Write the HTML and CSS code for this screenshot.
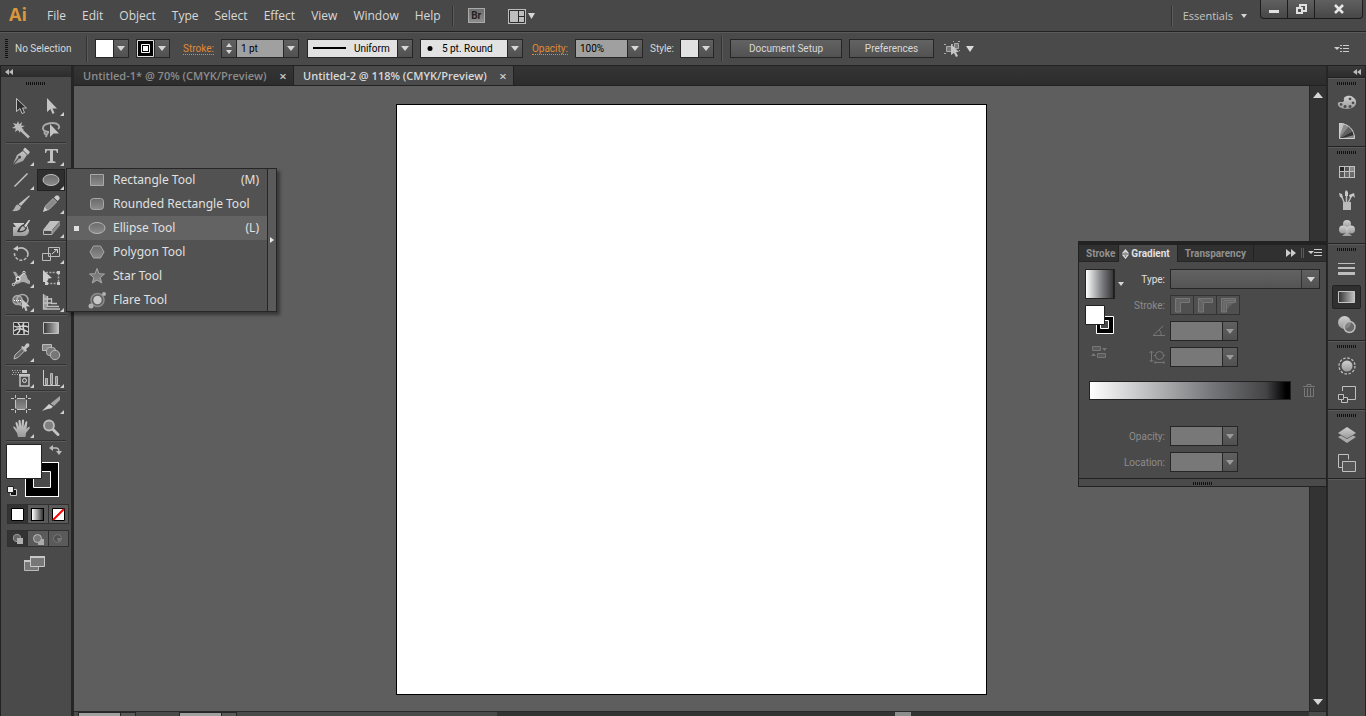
FILE: index.html
```html
<!DOCTYPE html>
<html lang="en">
<head>
  <meta charset="UTF-8" />
  <title>Untitled-2 @ 118% (CMYK/Preview)</title>
  <meta name="viewport" content="width=device-width, initial-scale=1.0"/>
  <link rel="stylesheet" href="styles.css">
</head>
<body>

<!-- shared gradients for the icons -->
<svg class="defs" width="0" height="0" aria-hidden="true">
  <defs>
    <linearGradient id="shape" x1="0" y1="0" x2="0" y2="1"><stop offset="0" stop-color="#6a6a6a"/><stop offset="1" stop-color="#8c8c8c"/></linearGradient>
    <linearGradient id="metal" x1="0" y1="0" x2="0" y2="1"><stop offset="0" stop-color="#d0d0d0"/><stop offset="1" stop-color="#9a9a9a"/></linearGradient>
    <linearGradient id="fade" x1="0" y1="0" x2="1" y2="0"><stop offset="0" stop-color="#333"/><stop offset="1" stop-color="#c4c4c4"/></linearGradient>
  </defs>
</svg>

<div class="app">

  <header class="menubar">
    <div class="logo">Ai</div>
    <nav class="menus">
      <button>File</button>
      <button>Edit</button>
      <button>Object</button>
      <button>Type</button>
      <button>Select</button>
      <button>Effect</button>
      <button>View</button>
      <button>Window</button>
      <button>Help</button>
    </nav>
    <span class="divider"></span>
    <button class="bridge">Br</button>
    <button class="arrange" aria-label="Arrange documents">
      <svg width="28" height="16" viewBox="0 0 28 16"><path fill="#bdbdbd" d="M0 1h18v15H0z"/><path fill="none" stroke="#2b2b2b" stroke-width="1" d="M1.500 2.500h15v12h-15zM10.500 2.500v12M10.500 8.500h6"/><path fill="#d6d6d6" d="M20 5h7l-3.500 6z"/></svg>
    </button>
    <span class="divider push"></span>
    <button class="workspace-name">Essentials <span class="tri small"></span></button>
    <div class="window-buttons">
      <button aria-label="Minimize"><svg width="12" height="12" viewBox="0 0 12 12"><path fill="#e0e0e0" d="M1 7h10v3H1z"/></svg></button>
      <button aria-label="Restore"><svg width="13" height="12" viewBox="0 0 13 12"><path fill="none" stroke="#e0e0e0" stroke-width="2" d="M2 5h5v5H2zM5 4V2h6v6H8"/></svg></button>
      <button class="close" aria-label="Close"><svg width="12" height="12" viewBox="0 0 12 12"><path fill="none" stroke="#e6e6e6" stroke-width="2.500" d="M2 2l8 8M10 2l-8 8"/></svg></button>
    </div>
  </header>

  <section class="controlbar">
    <span class="vgrip"></span>
    <span class="selection">No Selection</span>
    <span class="divider tall"></span>
    <div class="combo"><span class="chip white"></span><button aria-label="Fill"><span class="tri"></span></button></div>
    <div class="combo"><span class="chip stroke-chip"><svg width="17" height="17" viewBox="0 0 17 17"><path fill="#000" stroke="#ddd" d="M.500.500h16v16H.500z"/><path fill="#000" stroke="#fff" d="M4.500 4.500h8v8h-8z"/><path fill="#fff" d="M6 6h5v5H6z"/></svg></span><button aria-label="Stroke color"><span class="tri"></span></button></div>
    <div class="field">
      <a href="#stroke" class="hot">Stroke:</a>
      <div class="combo">
        <button class="stepper" aria-label="Step stroke"><span class="tri up"></span><span class="tri"></span></button>
        <input class="weight" type="text" value="1 pt" aria-label="Stroke weight">
        <button aria-label="Stroke weight list"><span class="tri"></span></button>
      </div>
    </div>
    <div class="combo light profile">
      <svg width="38" height="17" viewBox="0 0 38 17"><path fill="#000" d="M5 7h33v2H5z"/></svg>
      <select aria-label="Width profile"><option>Uniform</option></select>
      <span class="cap"><span class="tri"></span></span>
    </div>
    <div class="combo light brush">
      <svg width="16" height="17" viewBox="0 0 16 17"><circle cx="9" cy="8.500" r="2.500"/></svg>
      <select aria-label="Brush"><option>5 pt. Round</option></select>
      <span class="cap"><span class="tri"></span></span>
    </div>
    <div class="field opacity">
      <a href="#opacity" class="hot">Opacity:</a>
      <div class="combo">
        <input class="percent" type="text" value="100%" aria-label="Opacity">
        <button aria-label="Opacity list"><span class="tri"></span></button>
      </div>
    </div>
    <div class="field style">
      <span class="label">Style:</span>
      <div class="combo"><span class="chip pale"></span><button aria-label="Graphic style"><span class="tri"></span></button></div>
    </div>
    <span class="divider tall"></span>
    <button class="push-btn setup">Document Setup</button>
    <button class="push-btn prefs">Preferences</button>
    <button class="similar" aria-label="Select similar objects">
      <svg width="30" height="16" viewBox="0 0 30 16"><path fill="#777" stroke="#aaa" d="M2.500 5.500h5v5h-5zM10.500 2.500h4v5h-4z"/><path stroke="#aaa" stroke-width="1" fill="none" d="M0 3.500h2M0 12.500h2M7 3.500h2M14 .500h2M9 .500h1M15 9.500h1"/><path fill="#c4c4c4" d="M7 3l8 8h-3l2 4-2 1-2-4-3 2z"/><path fill="#dadada" d="M22 5h8l-4 6z"/></svg>
    </button>
    <button class="bar-menu" aria-label="Panel menu">
      <svg width="16" height="10" viewBox="0 0 16 10"><path fill="#ccc" d="M0 3h6L3 6z"/><path stroke="#ccc" fill="none" d="M6 1.500h2M9 1.500h6M6 4.500h2M9 4.500h6M6 7.500h2M9 7.500h6"/></svg>
    </button>
  </section>

  <main class="workspace">

    <aside class="toolbar">
      <div class="collapse"><svg width="9" height="6" viewBox="0 0 9 6"><path fill="#bbb" d="M4 0v6L0 3zM8 0v6L4 3z"/></svg></div>
      <div class="grip"></div>

      <div class="tools">
        <button class="tool" aria-label="Selection"><svg viewBox="0 0 20 20"><path fill="#303030" stroke="#c0c0c0" d="M5.500 2.500v13l3.500-3 2 5 2.500-1-2-4.500h4z"/></svg></button>
        <button class="tool more" aria-label="Direct Selection"><svg viewBox="0 0 20 20"><path fill="#c4c4c4" d="M6 2v14l3.500-3 2 5 2-1-2-4.500H16z"/></svg></button>
        <button class="tool" aria-label="Magic Wand"><svg viewBox="0 0 20 20"><path fill="#bbb" d="M7 1l1.200 3.200L11 2l-.8 3.500L14 6l-3.500 1.500L13 10l-3.500-.5L9 13l-2-3-3 2 .8-3.500L1 8l3.200-2L2 3l3.800 1z"/><path stroke="#bbb" stroke-width="2.500" d="M9 9l9 8.500"/></svg></button>
        <button class="tool" aria-label="Lasso"><svg viewBox="0 0 20 20"><path fill="none" stroke="#aaa" stroke-width="1.800" d="M8 12C3 12 1.500 9.500 2 7.500 3 3 14 1.500 17.500 5c1.200 1.500.5 3-.5 4M5 11c-3 2-1 4 1 3s0-3-1-2M6 14l-1 3"/><path fill="#c4c4c4" d="M9 4v13l3.500-3.500H18z"/></svg></button>
      </div>
      <div class="tools">
        <button class="tool more" aria-label="Pen"><svg viewBox="0 0 20 20"><path fill="url(#metal)" d="M2 18l4-9 6-4 4 4-4 6-9 3.500 5-6a1.500 1.500 0 1 0-.8-.8zM12 4l2-2.500L19 6l-2 3z"/></svg></button>
        <button class="tool more" aria-label="Type"><svg viewBox="0 0 20 20"><path fill="#c0c0c0" d="M4 3h13v4h-1l-1-2.500h-3V15l2.500.8v1.200h-8v-1.200L9 15V4.500H6L5 7H4z"/></svg></button>
        <button class="tool more" aria-label="Line Segment"><svg viewBox="0 0 20 20"><path stroke="#c4c4c4" stroke-width="1.400" d="M3.500 16.500l13-13"/></svg></button>
        <div class="slot">
          <button class="tool more active" aria-label="Ellipse"><svg viewBox="0 0 20 20"><ellipse cx="10" cy="10" rx="8" ry="5.500" fill="url(#shape)" stroke="#bdbdbd"/></svg></button>
          <div class="flyout">
            <ul>
              <li><button><svg viewBox="0 0 18 18"><path fill="url(#shape)" stroke="#a8a8a8" d="M2.500 3.500h13v11h-13z"/></svg>Rectangle Tool<kbd>(M)</kbd></button></li>
              <li><button><svg viewBox="0 0 18 18"><rect x="2.500" y="3.500" width="13" height="11" rx="3" fill="url(#shape)" stroke="#a8a8a8"/></svg>Rounded Rectangle Tool</button></li>
              <li class="current"><button><svg viewBox="0 0 18 18"><ellipse cx="9" cy="9" rx="8" ry="5.500" fill="url(#shape)" stroke="#b4b4b4"/></svg>Ellipse Tool<kbd>(L)</kbd></button></li>
              <li><button><svg viewBox="0 0 18 18"><path fill="url(#shape)" stroke="#a8a8a8" d="M5.500 3h7L16 9l-3.500 6h-7L2 9z"/></svg>Polygon Tool</button></li>
              <li><button><svg viewBox="0 0 18 18"><path fill="url(#shape)" stroke="#a8a8a8" d="M9 1.500l2 5.300 5.500.2-4.300 3.500 1.500 5.500L9 13l-4.700 3 1.500-5.500L1.500 7l5.500-.2z"/></svg>Star Tool</button></li>
              <li><button><svg viewBox="0 0 18 18"><circle cx="9.500" cy="9" r="6.500" fill="#5e5e5e" stroke="#8c8c8c" stroke-width="1.500"/><circle cx="9.500" cy="9" r="4.200" fill="#c8c8c8"/><circle cx="3" cy="15" r="2.500" fill="#b0b0b0"/><circle cx="16" cy="3" r="2" fill="#b0b0b0"/></svg>Flare Tool</button></li>
            </ul>
            <button class="tearoff" aria-label="Tear off"><svg width="4" height="6" viewBox="0 0 4 6"><path fill="#e8e8e8" d="M0 0l4 3-4 3z"/></svg></button>
          </div>
        </div>
        <button class="tool" aria-label="Paintbrush"><svg viewBox="0 0 20 20"><path fill="#c0c0c0" d="M19 2L10 12 7.500 10 18 1.500z"/><path fill="#b0b0b0" d="M7 10.500l3 2.500c-1 4-5 4.500-9 4 3-1.500 2.500-6 6-6.500z"/></svg></button>
        <button class="tool more" aria-label="Pencil"><svg viewBox="0 0 20 20"><path fill="#8a8a8a" stroke="#aaa" d="M3 17l1.500-5L12 4.500 15.500 8 8 15.500z"/><path fill="#ccc" d="M13 3.500l2-2h2L18.500 3v2l-2 2zM2 18l1.500-5 3 3z"/></svg></button>
        <button class="tool" aria-label="Blob Brush"><svg viewBox="0 0 20 20"><path fill="url(#metal)" d="M2 5h11v3h4c0 2 0 3 1 4 0 4-2 6-6 6H2V9h3z"/><path fill="#3a3a3a" d="M13 6l3 4c-1 4-6 5-10 4 1-2 2-6 7-8z"/><path fill="#b4b4b4" d="M12 8l2.500 2c-1 3-4 3-6 3 1-2 1-4 3.500-5z"/><path fill="#d0d0d0" stroke="#3a3a3a" stroke-width=".8" d="M18 1l1.500 1.500L15 10l-2.500-2z"/></svg></button>
        <button class="tool more" aria-label="Eraser"><svg viewBox="0 0 20 20"><path fill="#c0c0c0" d="M9 3h10l-8 9H2z"/><path fill="#8d8d8d" d="M11 12.500l8-9v4l-7.500 9z"/><path fill="none" stroke="#b8b8b8" d="M2.500 12.500h8.500v4H2.500zM5 12l5-6"/></svg></button>
      </div>
      <div class="tools">
        <button class="tool more" aria-label="Rotate"><svg viewBox="0 0 20 20"><path fill="none" stroke="#bbb" stroke-width="1.600" d="M7 4.500c5-2 10 1.500 10 5.500"/><path fill="none" stroke="#bbb" stroke-width="1.600" stroke-dasharray="3 1.500" d="M17 10a6.500 6.500 0 1 1-13.500-1"/><path fill="#ccc" d="M2 5l5-3.500V7z"/></svg></button>
        <button class="tool more" aria-label="Scale"><svg viewBox="0 0 20 20"><path fill="none" stroke="#bbb" d="M7.500 3.500h11v9h-11zM1.500 9.500h8v7h-8z"/><path stroke="#d8d8d8" d="M11 10l5-4.500M13 5.500h3.500V9" fill="none"/></svg></button>
        <button class="tool more" aria-label="Width"><svg viewBox="0 0 20 20"><path fill="#a8a8a8" d="M2 4c3-1 4 1 5 4 3 0 3-3 6-3 4 1 2 6 6 8v3c-3 0-5-2-7-2-3 0-4 3-9 2 1-2 2-3 2-5S3 6 2 4z"/><path stroke="#ddd" fill="none" d="M2 17L13 5"/><circle cx="7" cy="11" r="2" fill="#4a4a4a" stroke="#fff"/><circle cx="2.500" cy="16.500" r="1.200" fill="#4a4a4a" stroke="#ddd"/><circle cx="13" cy="4.500" r="1.200" fill="#4a4a4a" stroke="#ddd"/></svg></button>
        <button class="tool" aria-label="Free Transform"><svg viewBox="0 0 20 20"><path fill="none" stroke="#aaa" stroke-width="1.500" stroke-dasharray="2 1.300" d="M5 4.500h12.500v11H5"/><path fill="#ccc" d="M16 3h3v3h-3zM16 14h3v3h-3zM4 14h3v3H4zM2 2l9 8-3.500.5L6 14 2 14z"/></svg></button>
        <button class="tool more" aria-label="Shape Builder"><svg viewBox="0 0 20 20"><circle cx="6.500" cy="8" r="4.500" fill="#777" stroke="#aaa" stroke-width="1.500"/><circle cx="11.500" cy="8" r="5.500" fill="none" stroke="#aaa" stroke-width="1.500"/><path stroke="#fff" stroke-dasharray="1 1" d="M3 8.500h9"/><path fill="#c8c8c8" d="M11 7l8 7.500h-4l1.500 4-2 .5-1.500-4-2 2z"/></svg></button>
        <button class="tool more" aria-label="Perspective Grid"><svg viewBox="0 0 20 20"><path fill="#999" d="M2 2l4 2v13H2z"/><path fill="none" stroke="#c0c0c0" stroke-width="1.300" d="M2.500 2v15H19M6.500 4v10.500H18M10.500 6v5.500H16M2 7h9M2 11h9"/></svg></button>
      </div>
      <div class="tools">
        <button class="tool" aria-label="Mesh"><svg viewBox="0 0 20 20"><path fill="#333" stroke="#c0c0c0" d="M2.500 4.500h15v12h-15z"/><path fill="none" stroke="#d0d0d0" stroke-width="1.500" d="M7 5c3 3 3 8-1 11M13 5c-3 3 1 6 0 11M3 8c4 3 8-2 14 1M3 13c5-4 8-2 14 1"/></svg></button>
        <button class="tool" aria-label="Gradient"><svg viewBox="0 0 20 20"><path fill="url(#fade)" stroke="#c0c0c0" d="M2.500 4.500h15v11h-15z"/></svg></button>
        <button class="tool more" aria-label="Eyedropper"><svg viewBox="0 0 20 20"><path fill="#666" stroke="#bbb" d="M3 17l1-4 7-6.500L13.500 9 7 15.500z"/><path fill="#c4c4c4" d="M10 5l1.500-1 1.500 1 2-3c2-2 4.500.5 3 2.500l-3 2.500 1 1.500-1.500 1.500z"/></svg></button>
        <button class="tool" aria-label="Blend"><svg viewBox="0 0 20 20"><path fill="#888" stroke="#bbb" d="M1.500 2.500h9v6h-9z"/><rect x="5.500" y="5.500" width="9" height="8" rx="3" fill="#777" stroke="#bbb"/><circle cx="14" cy="13" r="4.700" fill="#777" stroke="#bbb"/></svg></button>
      </div>
      <div class="tools">
        <button class="tool more" aria-label="Symbol Sprayer"><svg viewBox="0 0 20 20"><path fill="none" stroke="#bbb" stroke-dasharray="1 1.500" d="M1 2.500h9M2 4.500h8M1 6.500h8"/><path fill="#c8c8c8" d="M11 2h5v3h-5zM8 6h11v2H8z"/><path fill="#4a4a4a" stroke="#c0c0c0" stroke-width="1.500" d="M9 8h9v10H9z"/><circle cx="13.500" cy="12.500" r="2" fill="#555" stroke="#ddd"/></svg></button>
        <button class="tool more" aria-label="Column Graph"><svg viewBox="0 0 20 20"><path fill="none" stroke="#ccc" d="M2.500 2v15.500H19"/><path fill="#888" stroke="#bbb" d="M4.500 10.500h2v6h-2zM9.500 5.500h2v11h-2zM14.500 8.500h2v8h-2z"/></svg></button>
      </div>
      <div class="tools">
        <button class="tool" aria-label="Artboard"><svg viewBox="0 0 20 20"><path fill="url(#shape)" d="M4 5h12v10H4z"/><path fill="none" stroke="#c4c4c4" d="M4.500 1v3M4.500 16v3M15.500 1v3M15.500 16v3M0 4.500h3M0 15.500h3M17 4.500h3M17 15.500h3M4.500 6v8M15.500 6v8M6 4.500h8M6 15.500h8"/></svg></button>
        <button class="tool more" aria-label="Slice"><svg viewBox="0 0 20 20"><path fill="#a4a4a4" d="M19 2v4l-6 6-3.500-2.500z"/><path fill="#d0d0d0" d="M1 17l7-7 4 2.500-2 2c-3 0-5 1-9 2.500z"/></svg></button>
        <button class="tool more" aria-label="Hand"><svg viewBox="0 0 20 20"><path fill="url(#metal)" d="M2 9c1-1 2 0 4 2L4.500 5c0-1.500 1.500-1.500 2 0L8 9 7.500 3c0-1.500 2-1.500 2 0l.8 6L11 2.500c.2-1.500 2-1.200 2 .2l-.3 6.800L14.500 4c.6-1.200 2-.6 1.700.7L15.500 11l2-2c1.300-.6 1.500.6 1 1.400L15 15l-.5 4H7l-1-4z"/></svg></button>
        <button class="tool" aria-label="Zoom"><svg viewBox="0 0 20 20"><circle cx="8" cy="7.500" r="5" fill="#808080" stroke="#bdbdbd" stroke-width="1.800"/><path stroke="#c4c4c4" stroke-width="3" stroke-linecap="round" d="M12.500 12l4.500 4.500"/></svg></button>
      </div>

      <div class="colors">
        <svg width="62" height="58" viewBox="0 0 62 58" role="img" aria-label="Fill and stroke">
          <path fill="#fff" d="M19 19h34v35H19z"/><path fill="#000" d="M20 20h32v33H20z"/><path fill="#4a4a4a" stroke="#fff" d="M27.500 28.500h17v16h-17z"/>
          <path fill="#fff" stroke="#222" d="M.500 1.500h35v34H.500z"/>
          <path fill="none" stroke="#bbb" stroke-width="1.300" d="M46 5h4q3 0 3 4"/><path fill="#bbb" d="M43 5l4-3v6zM50 8h6l-3 4z"/>
          <path fill="#111" stroke="#ccc" d="M4.500 46.500h6v6h-6z"/><path fill="#eee" stroke="#222" d="M1.500 43.500h6v6h-6z"/>
        </svg>
      </div>
      <div class="modes paint">
        <button class="on" aria-label="Color"><svg width="13" height="13" viewBox="0 0 13 13"><path fill="#fff" stroke="#000" d="M.500.500h12v12H.500z"/></svg></button>
        <button aria-label="Gradient fill"><span class="mini-gradient"></span></button>
        <button aria-label="None"><svg width="13" height="13" viewBox="0 0 13 13"><path fill="#fff" stroke="#000" d="M.500.500h12v12H.500z"/><path stroke="#f00" stroke-width="2" d="M1 12L12 1"/></svg></button>
      </div>
      <div class="modes draw">
        <button class="on" aria-label="Draw Normal"><svg width="12" height="12" viewBox="0 0 12 12"><circle cx="5" cy="5" r="3.700" fill="#666" stroke="#999"/><path fill="#b0b0b0" d="M5 5h6v6H5z"/></svg></button>
        <button aria-label="Draw Behind"><svg width="12" height="12" viewBox="0 0 12 12"><path fill="#aaa" d="M6 6h6v6H6z"/><circle cx="5.500" cy="5.500" r="4" fill="#777" stroke="#bbb"/></svg></button>
        <button aria-label="Draw Inside" disabled><svg width="12" height="12" viewBox="0 0 12 12"><circle cx="5.500" cy="5.500" r="4" fill="#4f4f4f" stroke="#777"/><path fill="#777" d="M5 5h5v1L6 9z"/></svg></button>
      </div>
      <button class="screen-mode" aria-label="Screen mode"><svg width="22" height="17" viewBox="0 0 22 17"><path fill="#777" stroke="#bbb" d="M.500 5.500h14v10H.500z"/><path fill="#777" stroke="#c8c8c8" d="M6.500 1.500h14v10h-14z"/><path fill="#c8c8c8" d="M6 1h15v2H6zM0 5h6v2H0z"/></svg></button>
    </aside>

    <section class="document">
      <div class="tabs">
        <div class="tab"><span>Untitled-1* @ 70% (CMYK/Preview)</span><button aria-label="Close tab">×</button></div>
        <div class="tab selected"><span>Untitled-2 @ 118% (CMYK/Preview)</span><button aria-label="Close tab">×</button></div>
      </div>
      <div class="view">
        <div class="canvas"><div class="artboard"></div></div>
        <div class="vscroll"><span class="tri up big"></span><span class="tri big"></span></div>
      </div>
      <div class="statusbar">
        <span class="status-box"></span><span class="status-cap"></span>
        <span class="status-box second"></span><span class="status-cap"></span>
        <span class="status-fill"></span>
        <span class="hscroll"><span class="thumb"></span></span>
        <span class="corner"></span>
      </div>
    </section>

    <aside class="dock">
      <div class="collapse right"><svg width="9" height="6" viewBox="0 0 9 6"><path fill="#bbb" d="M4 0v6L0 3zM8 0v6L4 3z"/></svg></div>
      <div class="dock-group">
        <div class="grip"></div>
        <button aria-label="Color"><svg viewBox="0 0 20 20"><path fill="url(#metal)" fill-rule="evenodd" d="M10 3c3-1 8 1 9 5 1 5-4 8-9 8-6 0-10-3-9-6 1-2 5 0 6-2 0-2-1-4 3-5zM4 10a1.400 1.400 0 1 0 .1 0zM8 12a1.500 1.500 0 1 0 .1 0zM13 12a1.500 1.500 0 1 0 .1 0zM16 8.500a1.400 1.400 0 1 0 .1 0zM13 4.500a1.400 1.400 0 1 0 .1 0z"/></svg></button>
        <button aria-label="Color Guide"><svg viewBox="0 0 20 20"><path fill="#8a8a8a" d="M2 2c9 0 16 7 16 16H2z"/><path fill="#c0c0c0" d="M2 2l5 .8L2 17z"/><path fill="#606060" d="M2 18L12 5l4 5z"/><path fill="#333" d="M2 18l14-8 1.500 4z"/><path fill="none" stroke="#d0d0d0" d="M2.500 2.500c9 0 15 6.500 15 15h-15z"/></svg></button>
      </div>
      <div class="dock-group">
        <div class="grip"></div>
        <button aria-label="Swatches"><svg viewBox="0 0 20 20"><path fill="#c0c0c0" d="M2 4h16v12H2z"/><path fill="#262626" d="M3 5h4v4H3z"/><path fill="#555" d="M8 5h4v4H8zM3 10h4v5H3z"/><path fill="#888" d="M13 5h4v4h-4z"/><path fill="#6a6a6a" d="M8 10h4v5H8zM13 10h4v5h-4z"/></svg></button>
        <button aria-label="Brushes"><svg viewBox="0 0 20 20"><path fill="#bbb" d="M6 12h8v8H6z"/><path stroke="#bbb" stroke-width="1.500" d="M7 12L4 5M9.500 12V4M11.500 12l3-6"/><path fill="#c8c8c8" d="M2 3l3 1 1 4-3-1zM9 0l2 2v4H8V2zM12 5l5-2 1 5-2-2-3 2z"/></svg></button>
        <button aria-label="Symbols"><svg viewBox="0 0 20 20"><g fill="url(#metal)"><circle cx="10" cy="6" r="4"/><circle cx="6" cy="11.500" r="4"/><circle cx="14" cy="11.500" r="4"/><path d="M9 9h2l.5 6 3.500 3H5l3.500-3z"/></g></svg></button>
      </div>
      <div class="dock-group">
        <div class="grip"></div>
        <button aria-label="Stroke"><svg viewBox="0 0 20 20"><path fill="#bdbdbd" d="M1 4h17v1H1zM1 8h17v2H1zM1 13h17v3H1z"/></svg></button>
        <button class="active" aria-label="Gradient"><svg viewBox="0 0 20 20"><path fill="url(#fade)" stroke="#c4c4c4" d="M1.500 4.500h16v11h-16z"/></svg></button>
        <button aria-label="Transparency"><svg viewBox="0 0 20 20"><circle cx="7.500" cy="7.500" r="6.500" fill="url(#metal)"/><circle cx="12.500" cy="12" r="5.500" fill="#777" fill-opacity=".7" stroke="#bbb" stroke-width="1.500"/></svg></button>
      </div>
      <div class="dock-group">
        <div class="grip"></div>
        <button aria-label="Appearance"><svg viewBox="0 0 20 20"><circle cx="10" cy="10" r="5.500" fill="url(#metal)"/><circle cx="10" cy="10" r="8" fill="none" stroke="#bbb" stroke-width="1.300" stroke-dasharray="2.500 1.700"/></svg></button>
        <button aria-label="Graphic Styles"><svg viewBox="0 0 20 20"><path fill="none" stroke="#c0c0c0" d="M5.500 7V2.500h13v13H11"/><path fill="#444" stroke="#c0c0c0" d="M4.500 13.500h6v5h-6z"/><path fill="#444" stroke="#c0c0c0" d="M1.500 10.500h5v5h-5z"/></svg></button>
      </div>
      <div class="dock-group">
        <div class="grip"></div>
        <button aria-label="Layers"><svg viewBox="0 0 20 20"><path fill="#aaa" d="M1 12l3-1.500 6 3.500 6-3.500 3 1.500-9 6z"/><path fill="url(#metal)" d="M10 2l9 6-9 5.500L1 8z"/></svg></button>
        <button aria-label="Artboards"><svg viewBox="0 0 20 20"><path fill="none" stroke="#c0c0c0" d="M5.500 14.500h-4v-13h10v5"/><path fill="#555" stroke="#c0c0c0" d="M5.500 8.500h13v10h-13z"/></svg></button>
      </div>
      <div class="dock-group rest"></div>
    </aside>

    <section class="gradient-panel">
      <div class="panel-tabs">
        <button>Stroke</button>
        <button class="selected"><svg width="7" height="10" viewBox="0 0 7 10"><path fill="none" stroke="#ddd" stroke-width="1.200" d="M1 4l2.500-3L6 4zM1 6l2.500 3L6 6z"/></svg>Gradient</button>
        <button>Transparency</button>
        <span class="panel-icons">
          <svg width="37" height="12" viewBox="0 0 37 12"><path fill="#ccc" d="M0 2l5 4-5 4zM5 2l5 4-5 4z"/><path stroke="#5a5a5a" d="M15.500 1v10M17.500 1v10"/><path fill="#ccc" d="M22 4h6l-3 3z"/><path stroke="#ccc" d="M28 2.500h8M28 5.500h8M28 8.500h8"/></svg>
        </span>
      </div>
      <div class="panel-body">
        <div class="panel-top">
          <div class="thumbs">
            <div class="thumb-row"><span class="gradient-thumb"></span><span class="tri small"></span></div>
            <svg width="30" height="30" viewBox="0 0 30 30" role="img" aria-label="Fill and stroke"><path fill="#000" stroke="#fff" d="M11.500 11.500h17v17h-17z"/><path fill="#4a4a4a" stroke="#fff" d="M15.500 15.500h8v8h-8z"/><path fill="#fff" stroke="#222" d="M.500.500h19v19H.500z"/></svg>
            <button class="reverse" aria-label="Reverse gradient" disabled><svg width="18" height="15" viewBox="0 0 18 15"><path fill="#5a5a5a" stroke="#777" d="M1.500 1.500h8v4h-8zM6.500 8.500h8v4h-8z"/><path fill="#777" d="M11 3h5l-2.500 3zM0 11h5l-2.500-3z"/></svg></button>
          </div>
          <div class="form">
            <label for="gtype" class="enabled">Type:</label>
            <div class="combo wide"><select id="gtype"><option></option></select><span class="cap"><span class="tri"></span></span></div>
            <span class="label">Stroke:</span>
            <div class="stroke-modes">
              <button disabled aria-label="Within stroke"><svg viewBox="0 0 20 16"><path fill="#636363" stroke="#777" d="M3.500 15V1.500h14v4h-9V15z"/></svg></button>
              <button disabled aria-label="Along stroke"><svg viewBox="0 0 20 16"><path fill="#636363" stroke="#777" d="M3.500 15V1.500h14v4h-9V15zM3.500 1.500l5 4"/></svg></button>
              <button disabled aria-label="Across stroke"><svg viewBox="0 0 20 16"><path fill="#636363" stroke="#777" d="M3.500 15V1.500h14v4h-9V15zM6 15V3.500h12"/></svg></button>
            </div>
            <label for="angle"><svg width="13" height="12" viewBox="0 0 13 12"><path fill="none" stroke="#777" d="M11 1L1 10.500h12M7 5c2 1 2 3 2 5"/></svg></label>
            <div class="combo dim"><input id="angle" type="text" disabled><span class="cap"><span class="tri"></span></span></div>
            <label for="ratio"><svg width="16" height="14" viewBox="0 0 16 14"><path fill="none" stroke="#777" d="M2.500 1v11M.500 3l2-2 2 2M.500 10l2 2 2-2M6 12.500h9M6 11v3M15 11v3M5 5.500h2M14 5.500h2"/><circle cx="10.500" cy="5.500" r="4" fill="none" stroke="#777"/></svg></label>
            <div class="combo dim"><input id="ratio" type="text" disabled><span class="cap"><span class="tri"></span></span></div>
          </div>
        </div>
        <div class="ramp-row">
          <div class="ramp"></div>
          <button disabled aria-label="Delete stop"><svg width="12" height="13" viewBox="0 0 12 13"><path fill="none" stroke="#777" d="M0 2.500h12M4 2V.500h4V2M1.500 4v8.500h9V4M4.500 4v8M7.500 4v8"/></svg></button>
        </div>
        <div class="form stops">
          <label for="gopacity">Opacity:</label>
          <div class="combo dim"><input id="gopacity" type="text" disabled><span class="cap"><span class="tri"></span></span></div>
          <label for="glocation">Location:</label>
          <div class="combo dim"><input id="glocation" type="text" disabled><span class="cap"><span class="tri"></span></span></div>
        </div>
      </div>
      <div class="panel-foot"><div class="grip"></div></div>
    </section>

  </main>
</div>

</body>
</html>
```
FILE: styles.css
```css
* {
  margin: 0;
  padding: 0;
  box-sizing: border-box;
}

body {
  background: #2b2b2b;
  color: #d8d8d8;
  font-family: "Roboto", "Liberation Sans", sans-serif;
  font-size: 10px;
  overflow: hidden;
}

button, input, select {
  font: inherit;
  color: inherit;
  background: none;
  border: none;
  border-radius: 0;
  outline: none;
}

button {
  cursor: pointer;
}

select {
  appearance: none;
}

svg {
  display: block;
}

.defs {
  position: absolute;
}

/* the status bar runs past the bottom of the window */
.app {
  display: flex;
  flex-direction: column;
  height: calc(100vh + 13px);
}

.tri {
  display: block;
  border: 4px solid transparent;
  border-top: 5px solid #d6d6d6;
  border-bottom: none;
}

.tri.up {
  border-top: none;
  border-bottom: 5px solid #d6d6d6;
}

.tri.small {
  border-width: 3px;
  border-top-width: 4px;
  border-bottom: none;
}

.tri.big {
  border-width: 5px;
  border-top-width: 6px;
  border-bottom: none;
}

.tri.up.big {
  border-top: none;
  border-bottom: 6px solid #d6d6d6;
}

.grip {
  width: 20px;
  height: 3px;
  margin: 0 auto;
  background: repeating-linear-gradient(90deg, #111 0 1px, #4a4a4a 1px 2px);
}

/* menu bar */
.menubar {
  display: flex;
  align-items: center;
  flex: none;
  height: 32px;
  padding-left: 9px;
  background: #484848;
  border-bottom: 1px solid #222;
}

.logo {
  width: 38px;
  color: #d9963a;
  font-family: "Open Sans", sans-serif;
  font-size: 18px;
  font-weight: bold;
  line-height: 24px;
  padding-bottom: 4px;
}

.menus {
  display: flex;
  gap: 16px;
  font-family: "Open Sans", sans-serif;
  font-size: 12px;
}

.divider {
  width: 2px;
  height: 20px;
  background: #333;
  border-right: 1px solid #5a5a5a;
  margin-left: 11px;
}

.divider.tall {
  height: 26px;
  margin: 0;
}

.divider.push {
  margin-left: auto;
}

.bridge {
  width: 17px;
  height: 15px;
  margin-left: 14px;
  border: 1px solid #aaa;
  background: linear-gradient(#6e6e6e, #8c8c8c);
  color: #222;
  font-weight: bold;
}

.arrange {
  margin-left: 23px;
}

.workspace-name {
  display: flex;
  align-items: center;
  gap: 8px;
  margin-left: 10px;
  font-family: "Open Sans", sans-serif;
  font-size: 11px;
  color: #c4c4c4;
}

.window-buttons {
  display: flex;
  align-self: flex-start;
  margin: 0 3px 0 13px;
  border: 1px solid #1c1c1c;
  border-top: none;
  border-radius: 0 0 4px 4px;
  background: linear-gradient(#606060, #474747);
}

.window-buttons button {
  display: flex;
  align-items: center;
  justify-content: center;
  width: 27px;
  height: 18px;
  border-right: 1px solid #1c1c1c;
}

.window-buttons .close {
  width: 47px;
  border-right: none;
}

/* control bar */
.controlbar {
  display: flex;
  align-items: center;
  flex: none;
  gap: 7px;
  height: 34px;
  padding: 0 16px 1px 5px;
  background: #4a4a4a;
  border-top: 1px solid #5a5a5a;
  border-bottom: 1px solid #222;
}

.vgrip {
  width: 3px;
  height: 20px;
  background: repeating-linear-gradient(#111 0 1px, #4a4a4a 1px 2px);
}

.selection {
  width: 64px;
}

.combo {
  display: flex;
  height: 19px;
  border: 1px solid #262626;
  background: #5a5a5a;
}

.combo button, .cap {
  display: flex;
  align-items: center;
  justify-content: center;
  flex: none;
  width: 15px;
  border-left: 1px solid #262626;
  background: linear-gradient(#606060, #515151);
}

.combo input {
  background: #a0a0a0;
  color: #000;
  padding-left: 4px;
}

.combo .stepper {
  flex-direction: column;
  gap: 3px;
  border-left: none;
  border-right: 1px solid #262626;
}

.stepper .tri {
  border-width: 3px;
  border-top-width: 4px;
  border-bottom: none;
}

.stepper .tri.up {
  border-top: none;
  border-bottom: 4px solid #d6d6d6;
}

.chip {
  width: 17px;
}

.white {
  background: #fff;
}

.pale {
  background: #e2e2e2;
}

.field {
  display: flex;
  align-items: center;
  gap: 7px;
  margin-left: 6px;
}

.field.opacity {
  margin-left: 2px;
}

.field.style {
  margin-left: 0;
  gap: 6px;
}

.hot {
  color: #e08a35;
  text-decoration: none;
  border-bottom: 1px dotted #e08a35;
}

.weight {
  width: 46px;
}

.percent {
  width: 51px;
}

.light {
  background: #e2e2e2;
  color: #000;
}

.light select {
  flex: 1;
}

.profile {
  width: 106px;
  margin-left: 1px;
}

.profile select {
  padding-left: 8px;
}

.brush {
  width: 103px;
}

.brush select {
  padding-left: 5px;
}

.push-btn {
  height: 19px;
  border: 1px solid #262626;
  background: linear-gradient(#626262, #525252);
}

.setup {
  width: 112px;
}

.prefs {
  width: 85px;
}

.similar {
  margin-left: 3px;
}

.bar-menu {
  margin-left: auto;
}

/* workspace */
.workspace {
  display: flex;
  flex: 1;
  min-height: 0;
  position: relative;
}

.collapse {
  display: flex;
  align-items: center;
  height: 11px;
  padding-left: 4px;
  background: linear-gradient(#3a3a3a, #2c2c2c);
}

.collapse.right {
  justify-content: flex-end;
  padding-right: 3px;
}

.toolbar {
  flex: none;
  width: 74px;
  background: #4a4a4a;
  border-left: 1px solid #222;
  border-right: 3px solid #262626;
}

.toolbar > .grip {
  height: 17px;
  border: solid #4a4a4a;
  border-width: 5px 0 9px;
}

.tools {
  display: grid;
  grid-template-columns: 30px 30px;
  grid-auto-rows: 24px;
  margin: 0 5px 1px;
  border-bottom: 1px solid #333;
  box-shadow: 0 1px #5a5a5a;
}

.slot {
  position: relative;
}

.tool {
  display: flex;
  align-items: center;
  justify-content: center;
  width: 30px;
  height: 24px;
  position: relative;
}

.tool svg {
  width: 20px;
  height: 20px;
}

.tool.more::after {
  content: "";
  position: absolute;
  right: 2px;
  bottom: 2px;
  border: 2px solid #d0d0d0;
  border-top-color: transparent;
  border-left-color: transparent;
}

.tool.active {
  background: #2f2f2f;
  border: 1px solid #222;
  width: 28px;
  height: 22px;
  margin: 1px;
}

.tool.active::after {
  right: 0;
  bottom: 0;
}

.flyout {
  display: flex;
  position: absolute;
  left: 30px;
  top: 0;
  width: 211px;
  z-index: 5;
  border: 1px solid #262626;
  background: #525252;
  box-shadow: 3px 3px 3px rgba(0, 0, 0, 0.4);
}

.flyout ul {
  flex: 1;
  list-style: none;
  margin: -1px 0;
}

.flyout li button {
  display: flex;
  align-items: center;
  width: 100%;
  height: 24px;
  padding: 0 8px 2px 21px;
  font-family: "Noto Sans", sans-serif;
  font-size: 12px;
  color: #e0e0e0;
}

.flyout li svg {
  width: 18px;
  height: 18px;
  margin: 2px 7px 0 0;
}

.flyout kbd {
  margin-left: auto;
  font: inherit;
}

.flyout .current {
  background: #636363;
}

.flyout .current button {
  padding-left: 7px;
}

.flyout .current button::before {
  content: "";
  width: 5px;
  height: 5px;
  margin: 2px 9px 0 0;
  background: #e0e0e0;
}

.tearoff {
  width: 9px;
  padding-left: 2px;
  border-left: 1px solid #262626;
  background: #5a5a5a;
}

.colors {
  margin: 2px 0 0 5px;
}

.modes {
  display: flex;
  width: 62px;
  margin: 3px 0 0 6px;
  border: 1px solid #303030;
}

.modes button {
  display: flex;
  align-items: center;
  justify-content: center;
  flex: 1;
  height: 18px;
  background: #5a5a5a;
  border-right: 1px solid #303030;
}

.modes button:last-child {
  border-right: none;
}

.modes .on {
  background: #333;
}

.modes.draw {
  margin-top: 6px;
}

.modes.draw button {
  height: 15px;
}

.mini-gradient {
  width: 13px;
  height: 13px;
  border: 1px solid #000;
  background: linear-gradient(90deg, #fff, #333);
}

.screen-mode {
  margin: 8px 0 0 23px;
}

/* document */
.document {
  display: flex;
  flex-direction: column;
  flex: 1;
  min-width: 0;
}

.tabs {
  display: flex;
  flex: none;
  height: 20px;
  background: linear-gradient(#353535, #2c2c2c);
  border-bottom: 1px solid #222;
}

.tab {
  display: flex;
  align-items: center;
  justify-content: space-between;
  width: 220px;
  padding: 0 4px 0 9px;
  font-family: "Open Sans", sans-serif;
  font-size: 11px;
  font-weight: 600;
  color: #8c8c8c;
  white-space: nowrap;
  border-right: 1px solid #222;
}

.tab.selected {
  background: #4a4a4a;
  color: #d8d8d8;
}

.tab button {
  width: 12px;
  line-height: 12px;
  font-size: 13px;
  color: #ccc;
}

.view {
  display: flex;
  flex: 1;
  min-height: 0;
}

.canvas {
  display: flex;
  justify-content: center;
  flex: 1;
  padding: 18px 0 16px;
  background: #5e5e5e;
}

.artboard {
  height: 100%;
  aspect-ratio: 1;
  background: #fff;
  border: 1px solid #000;
}

.vscroll {
  display: flex;
  flex-direction: column;
  align-items: center;
  justify-content: space-between;
  width: 17px;
  padding: 6px 0;
  background: #333;
  border-left: 1px solid #262626;
}

.statusbar {
  display: flex;
  flex: none;
  height: 18px;
  padding-left: 4px;
  background: #4a4a4a;
  border-top: 1px solid #2a2a2a;
}

.status-box {
  width: 43px;
  border: 1px solid #262626;
  background: #a0a0a0;
}

.status-box.second {
  margin-left: 43px;
}

.status-cap {
  width: 15px;
  border: 1px solid #262626;
  border-left: none;
  background: #5a5a5a;
}

.status-fill {
  flex: 1;
  max-width: 260px;
}

.hscroll {
  flex: 2;
  background: #333;
}

.thumb {
  display: block;
  width: 16px;
  height: 17px;
  margin-left: 49%;
  background: #8c8c8c;
}

.corner {
  width: 17px;
}

/* icon dock */
.dock {
  display: flex;
  flex-direction: column;
  flex: none;
  width: 40px;
  background: #4a4a4a;
  border-left: 2px solid #262626;
  border-right: 1px solid #262626;
}

.dock-group {
  border-top: 1px solid #222;
  box-shadow: inset 0 1px #5a5a5a;
  padding-top: 4px;
}

.dock-group .grip {
  margin-bottom: 6px;
}

.dock-group button {
  display: flex;
  align-items: center;
  justify-content: center;
  width: 29px;
  height: 24px;
  margin: 0 auto 4px;
}

.dock-group button:last-child {
  margin-bottom: 3px;
}

.dock-group svg {
  width: 20px;
  height: 20px;
}

.dock-group .active {
  background: #303030;
  border: 1px solid #222;
  border-radius: 2px;
}

.rest {
  flex: 1;
}

/* floating gradient panel */
.gradient-panel {
  position: absolute;
  right: 39px;
  top: 175px;
  width: 249px;
  border: 1px solid #222;
  border-top-width: 4px;
  background: #4a4a4a;
  font-size: 10px;
}

.panel-tabs {
  display: flex;
  height: 17px;
  background: #303030;
  border-bottom: 1px solid #262626;
}

.panel-tabs button {
  display: flex;
  align-items: center;
  gap: 2px;
  padding: 0 7px;
  font-weight: bold;
  color: #909090;
  border-right: 1px solid #222;
}

.panel-tabs button:first-child {
  padding-right: 3px;
}

.panel-tabs .selected {
  height: 17px;
  padding: 0 7px 0 3px;
  background: #4a4a4a;
  color: #e0e0e0;
}

.panel-icons {
  margin: 2px 3px 0 auto;
}

.panel-body {
  padding: 7px 6px 6px;
  background: #4a4a4a;
}

.panel-top {
  display: flex;
}

.thumbs {
  width: 42px;
}

.thumb-row {
  display: flex;
  align-items: center;
  gap: 3px;
  margin-bottom: 6px;
}

.gradient-thumb {
  width: 30px;
  height: 30px;
  border: 1px solid #222;
  background: linear-gradient(90deg, #fff, #77787c 60%, #3a3a3c 95%, #111);
}

.reverse {
  margin: 10px 0 0 6px;
}

.form {
  display: grid;
  grid-template-columns: 38px 1fr;
  gap: 6px 5px;
  flex: 1;
  align-items: center;
  color: #8c8c8c;
}

.form label, .form .label {
  display: flex;
  justify-content: flex-end;
  white-space: nowrap;
}

.form .enabled {
  color: #e0e0e0;
}

.form .combo {
  height: 20px;
}

.form .wide {
  background: linear-gradient(#626262, #545454);
}

.wide select {
  flex: 1;
}

.wide .cap {
  width: 18px;
  border-left: 1px solid #333;
}

.dim {
  width: 68px;
}

.dim input {
  flex: 1;
  min-width: 0;
  background: #787878;
}

.dim .tri {
  border-top-color: #9a9a9a;
}

.stroke-modes {
  display: flex;
  width: 70px;
  height: 20px;
  border: 1px solid #333;
}

.stroke-modes button {
  flex: 1;
  border-right: 1px solid #333;
  background: #505050;
}

.stroke-modes button:last-child {
  border-right: none;
}

.stroke-modes svg {
  width: 20px;
  height: 16px;
  margin: 0 auto;
}

.ramp-row {
  display: flex;
  align-items: center;
  gap: 12px;
  margin: 14px 5px 26px 4px;
}

.ramp {
  flex: 1;
  height: 19px;
  border: 1px solid #222;
  background: linear-gradient(90deg, #fff, #77787c 60%, #444446 88%, #000 98%);
}

.stops {
  margin-left: 42px;
}

.panel-foot {
  height: 8px;
  padding-top: 3px;
  border-top: 1px solid #222;
}
```
